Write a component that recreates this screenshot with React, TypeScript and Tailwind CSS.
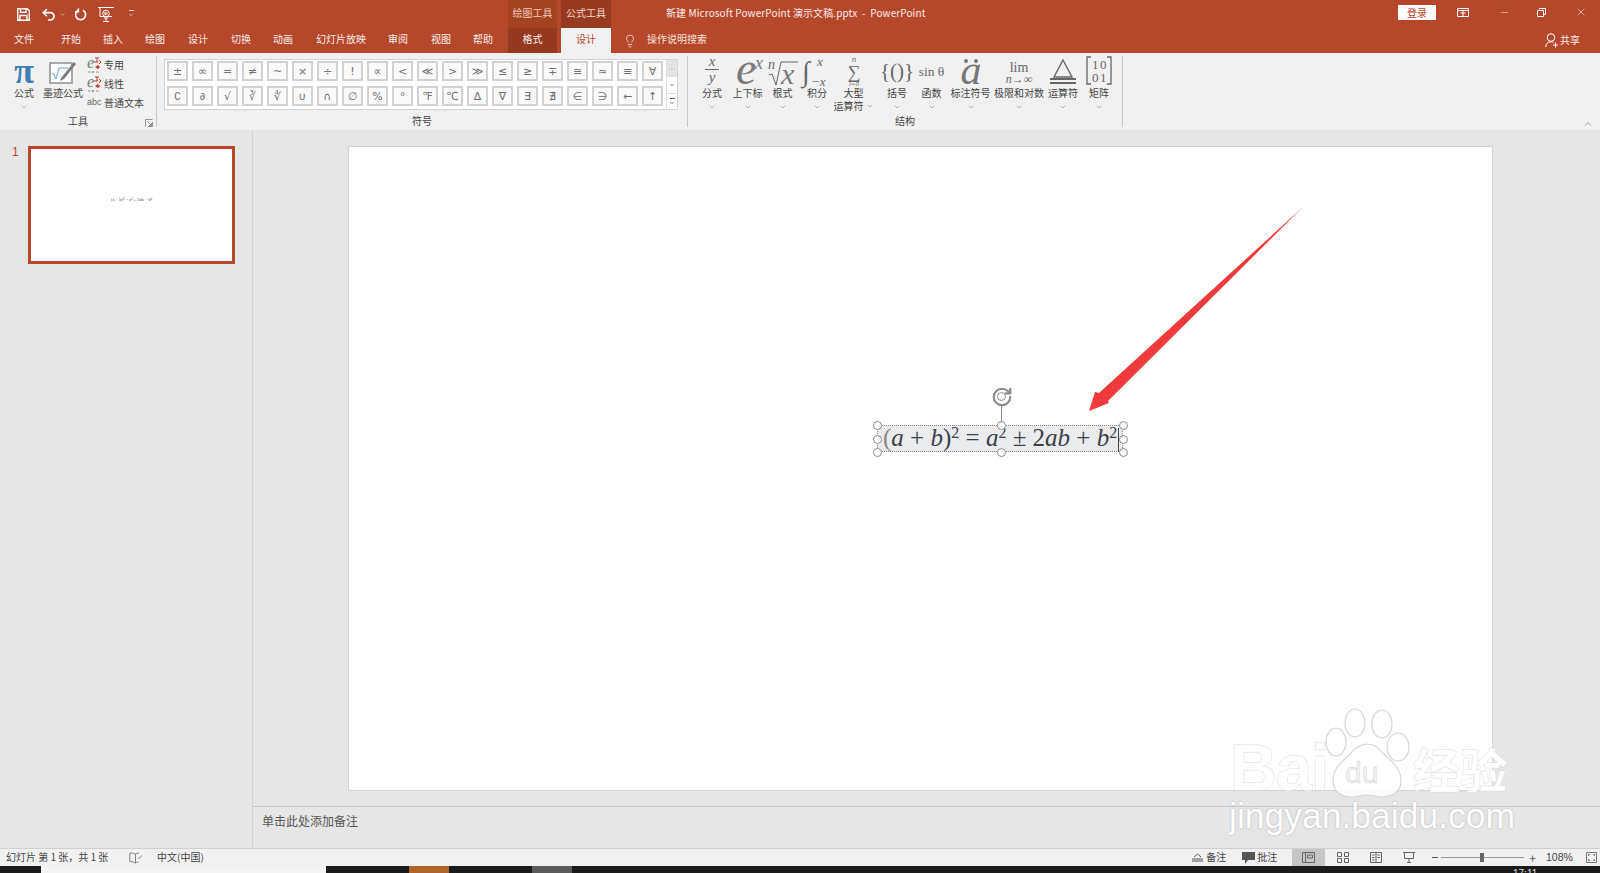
import React from "react";
import { Lightbulb, ChevronDown, ChevronUp, RotateCw, X, Minus } from "lucide-react";

const row1 = ["±","∞","=","≠","~","×","÷","!","∝","<","≪",">","≫","≤","≥","∓","≅","≈","≡","∀"];
const row2 = ["∁","∂","√","∛","∜","∪","∩","∅","%","°","℉","℃","∆","∇","∃","∄","∈","∋","←","↑"];
const serif = "font-['Liberation_Serif',serif]";

function Tab({ label, cls }: { label: string; cls: string }) {
  return <div className={`h-full flex items-center pb-[4px] text-[10px] text-[#fbeee9] whitespace-nowrap ${cls}`}>{label}</div>;
}

function Chev({ cls = "" }: { cls?: string }) {
  return <ChevronDown size={8} strokeWidth={1.5} className={`text-[#777] ${cls}`} />;
}

function EqIcon({ children, w = 36 }: { children: React.ReactNode; w?: number }) {
  return (
    <svg width={w} height={34} viewBox={`0 0 ${w} 34`} className={`shrink-0 overflow-visible ${serif} fill-[#666]`}>
      {children}
    </svg>
  );
}

function Struct({ w, label, label2, ml = "", children }: { w: string; label: string; label2?: string; ml?: string; children: React.ReactNode }) {
  return (
    <div className={`${w} ${ml} shrink-0 flex flex-col items-center`}>
      <div className="h-[31px] flex items-center justify-center overflow-visible">{children}</div>
      <div className="h-[14px] leading-[12px] text-[10px] text-[#444] whitespace-nowrap">{label}</div>
      {label2 ? (
        <div className="h-[12px] leading-[10px] text-[10px] text-[#444] whitespace-nowrap flex items-center gap-[2px] -mt-[1px]">{label2}<Chev /></div>
      ) : (
        <div className="h-[12px] flex items-center"><Chev /></div>
      )}
    </div>
  );
}

function GroupLabel({ children }: { children: React.ReactNode }) {
  return <div className="h-[12px] mt-[1px] leading-[12px] text-[10px] text-[#444] text-center">{children}</div>;
}

function Handle({ cls }: { cls: string }) {
  return <div className={`absolute w-[9px] h-[9px] rounded-full bg-white border-[1.5px] border-[#8c8c8c] ${cls}`} />;
}

function EFormula() {
  return (
    <svg width="16" height="16" viewBox="0 0 16 16" className={`shrink-0 mr-[1px] overflow-visible ${serif}`}>
      <text x="0" y="11" fontSize="16" fontStyle="italic" fill="#6f7f76">e</text>
      <path d="M8 1h4M10 1v4M7 5h4M12 3l2 2-2 2" fill="none" stroke="#c0392b" strokeWidth="1" />
      <path d="M8 10l3-2 2 2-2 2z" fill="#c0392b" />
      <path d="M1 15h3M5 14l2 2M7 14l-2 2M9 15h3" fill="none" stroke="#888" strokeWidth=".8" />
    </svg>
  );
}

function Sup() {
  return <sup className="text-[16px] -top-[8px] not-italic">2</sup>;
}

const wmText = "[-webkit-text-stroke:1px_#dcdcdc] [paint-order:stroke_fill]";

export default function App() {
  return (
    <div className="relative w-[1600px] h-[873px] overflow-hidden flex flex-col bg-[#e6e6e6] font-['Noto_Sans_CJK_SC','Noto_Sans',sans-serif]">
      {/* Title row */}
      <div className="h-[28px] shrink-0 flex bg-[#b7472a] text-white">
        <div className="w-[508px] shrink-0 flex items-center">
          <svg width="13" height="13" viewBox="0 0 13 13" fill="none" stroke="#fff" strokeWidth="1.4" className="ml-[17px]">
            <path d="M.7.7h9.500l2.100 2.100v9.500H.7z" />
            <path d="M3.500 .7v3.600h5.500V.7M3 12.300V7.500h7v4.800" />
          </svg>
          <svg width="14" height="13" viewBox="0 0 14 13" fill="none" stroke="#fff" strokeWidth="1.6" className="ml-[12px]">
            <path d="M5 1 1.300 4.600 5 8.200" />
            <path d="M1.500 4.600h6.800a3.700 3.700 0 0 1 0 7.400H6" />
          </svg>
          <ChevronDown size={7} strokeWidth={2} className="ml-[3px] text-[#f0cfc5]" />
          <svg width="13" height="13" viewBox="0 0 13 13" fill="none" stroke="#fff" strokeWidth="1.6" className="ml-[8px]">
            <path d="M4.200 2.300A5 5 0 1 0 9 2.300" />
            <path d="M4.400 .4v3.400H1" />
          </svg>
          <svg width="16" height="17" viewBox="0 0 16 17" fill="none" stroke="#fff" strokeWidth="1" className="ml-[11px]">
            <path d="M0 1.500h16M2 1.500v9h12" />
            <circle cx="8" cy="7.500" r="3.300" />
            <path d="M7 6v3l2.400-1.500zM6 12h4M5 15.500h6M8 12v3.500" />
          </svg>
          <div className="ml-[14px] flex flex-col items-center gap-[1px]">
            <div className="w-[5px] h-[1px] bg-[#f5d9d0]" />
            <ChevronDown size={6} strokeWidth={3} className="text-[#f5d9d0]" />
          </div>
        </div>
        <div className="w-[49px] shrink-0 bg-[#a5421f] flex items-center justify-center pb-[4px] text-[10px] text-[#efc9bd]">绘图工具</div>
        <div className="w-[50px] ml-[4px] shrink-0 bg-[#963a20] flex items-center justify-center pb-[4px] text-[10px] text-[#f4d6cc]">公式工具</div>
        <div className="ml-[55px] flex items-center pb-[4px] text-[10px] text-[#fbeee9] whitespace-pre tracking-[0.1px]">新建 Microsoft PowerPoint 演示文稿.pptx  -  PowerPoint</div>
        <div className="ml-auto flex items-center pr-[13px]">
          <div className="w-[38px] h-[15px] mb-[3px] bg-white flex items-center justify-center text-[10px] text-[#b7472a] mr-[21px]">登录</div>
          <svg width="12" height="9" viewBox="0 0 12 9" fill="none" stroke="#fff" strokeWidth="1" className="mb-[4px] mr-[30px]">
            <path d="M.5.5h11v8H.5zM.5 2.500h11M3.500 5h5M6 2.500V8" />
          </svg>
          <Minus size={11} strokeWidth={1} className="mb-[4px] mr-[27px]" />
          <svg width="9" height="9" viewBox="0 0 9 9" fill="none" stroke="#fff" strokeWidth="1" className="mb-[4px] mr-[29px]">
            <path d="M.5 2.500h6v6h-6zM2.500 2.500v-2h6v6h-2" />
          </svg>
          <X size={12} strokeWidth={1.1} className="mb-[4px]" />
        </div>
      </div>

      {/* Tab row */}
      <div className="h-[25px] shrink-0 flex items-stretch bg-[#b7472a] text-white">
        <Tab label="文件" cls="pl-[14px] w-[61px]" />
        <Tab label="开始" cls="w-[42px]" />
        <Tab label="插入" cls="w-[42px]" />
        <Tab label="绘图" cls="w-[43px]" />
        <Tab label="设计" cls="w-[43px]" />
        <Tab label="切换" cls="w-[42px]" />
        <Tab label="动画" cls="w-[43px]" />
        <Tab label="幻灯片放映" cls="w-[72px]" />
        <Tab label="审阅" cls="w-[43px]" />
        <Tab label="视图" cls="w-[42px]" />
        <Tab label="帮助" cls="w-[35px]" />
        <div className="w-[49px] shrink-0 bg-[#933a20] flex items-center justify-center pb-[4px] text-[10px] text-[#fbeee9]">格式</div>
        <div className="w-[50px] ml-[4px] shrink-0 bg-[#f1f1f1] flex items-center justify-center pb-[4px] text-[10px] text-[#b7472a]">设计</div>
        <Lightbulb size={14} strokeWidth={1.3} className="ml-[12px] self-center text-[#fbeee9]" />
        <div className="ml-[10px] flex items-center pb-[4px] text-[10px] text-[#f8e3dc]">操作说明搜索</div>
        <div className="ml-auto pr-[20px] flex items-center text-[10px] text-[#fbeee9]">
          <svg width="14" height="15" viewBox="0 0 14 15" fill="none" stroke="#fff" strokeWidth="1" className="mr-[-1px]">
            <circle cx="6" cy="4.500" r="3.800" />
            <path d="M.7 14c0-3 2-5.200 5.300-5.200 1 0 1.800.2 2.500.6M10.500 9.500v5M8 12h5" />
          </svg>
          <span className="ml-[2px] pb-[3px]">共享</span>
        </div>
      </div>

      {/* Ribbon */}
      <div className="relative h-[78px] shrink-0 flex bg-[#f1f1f1] border-b border-[#e2e2e2]">
        {/* Tools group */}
        <div className="relative w-[157px] shrink-0 my-[3px] border-r border-[#c8c8c8] flex flex-col">
          <div className="h-[62px] flex">
            <div className="w-[48px] flex flex-col items-center">
              <div className={`h-[31px] w-full flex items-center justify-center text-[36px] leading-[31px] font-bold text-[#3f7fb5] ${serif}`}>π</div>
              <div className="h-[14px] leading-[12px] text-[10px] text-[#444]">公式</div>
              <div className="h-[12px] flex items-center"><Chev /></div>
            </div>
            <div className="w-[30px] flex flex-col items-center">
              <div className="h-[31px] flex items-center justify-center">
                <svg width="28" height="26" viewBox="0 0 28 26" fill="none" className="overflow-visible">
                  <rect x="1" y="4" width="22" height="20" fill="#fff" stroke="#8f8f8f" strokeWidth="1.500" />
                  <path d="M3 15h2l2 5 3-11h9" stroke="#5b9bc9" strokeWidth="1" />
                  <path d="M6 12h15M6 18h15" stroke="#cfe0ec" strokeWidth=".6" />
                  <path d="M12 19 25 3l2 2-12 15-4 2z" fill="#7b7b7b" />
                </svg>
              </div>
              <div className="h-[14px] leading-[12px] text-[10px] text-[#444] whitespace-nowrap">墨迹公式</div>
            </div>
            <div className="ml-[9px] flex flex-col pt-[1px] gap-[3px]">
              <div className="h-[16px] flex items-center text-[10px] text-[#444]"><EFormula /><span className="pb-[2px]">专用</span></div>
              <div className="h-[16px] flex items-center text-[10px] text-[#444]"><EFormula /><span className="pb-[2px]">线性</span></div>
              <div className="h-[16px] flex items-center text-[10px] text-[#444]"><span className="w-[17px] text-[9px] text-[#666] font-['Liberation_Sans',sans-serif]">abc</span><span className="pb-[2px]">普通文本</span></div>
            </div>
          </div>
          <GroupLabel>工具</GroupLabel>
          <svg width="8" height="8" viewBox="0 0 8 8" fill="none" stroke="#777" strokeWidth=".8" className="absolute right-[3px] bottom-[0px]">
            <path d="M.5 7.500v-7h7M7.500 3v4.500H3M2.500 2.500l4 4M6.500 4v2.500H4" />
          </svg>
        </div>

        {/* Symbols group */}
        <div className="w-[531px] shrink-0 my-[3px] border-r border-[#c8c8c8] flex flex-col">
          <div className="h-[62px] pl-[7px] pt-[3px]">
            <div className="w-[514px] h-[51px] flex bg-white border border-[#d4d4d4]">
              <div className="w-[502px] pl-[2px] pt-[1px] flex flex-col gap-[5px]">
                {[row1, row2].map((r, i) => (
                  <div key={i} className="flex gap-[4px]">
                    {r.map((s, j) => (
                      <div key={j} className="w-[21px] h-[20px] shrink-0 flex items-center justify-center border-2 border-[#d2d2d2] bg-[#fafafa] text-[11px] leading-none text-[#707070] font-['DejaVu_Sans',sans-serif]">{s}</div>
                    ))}
                  </div>
                ))}
              </div>
              <div className="ml-auto w-[11px] flex flex-col border-l border-[#e0e0e0]">
                <div className="h-[17px] bg-[#e4e4e4] flex items-center justify-center"><ChevronUp size={6} strokeWidth={3} className="text-[#bbb]" /></div>
                <div className="h-[16px] flex items-center justify-center"><ChevronDown size={6} strokeWidth={3} className="text-[#555]" /></div>
                <div className="h-[16px] border-t border-[#e0e0e0] flex flex-col items-center justify-center gap-[1px]">
                  <div className="w-[5px] h-[1px] bg-[#555]" />
                  <ChevronDown size={6} strokeWidth={3} className="text-[#555]" />
                </div>
              </div>
            </div>
          </div>
          <GroupLabel>符号</GroupLabel>
        </div>

        {/* Structures group */}
        <div className="w-[435px] shrink-0 my-[3px] border-r border-[#c8c8c8] flex flex-col">
          <div className="h-[62px] pl-[6px] flex">
            <Struct w="w-[36px]" label="分式">
              <EqIcon>
                <text x="18" y="11" textAnchor="middle" fontSize="15" fontStyle="italic">x</text>
                <rect x="11" y="14" width="14" height="1" />
                <text x="18" y="27" textAnchor="middle" fontSize="15" fontStyle="italic">y</text>
              </EqIcon>
            </Struct>
            <Struct w="w-[35px]" label="上下标">
              <EqIcon>
                <text x="6" y="29" fontSize="46" fontStyle="italic" className="fill-[#7a7a7a]">e</text>
                <text x="25" y="14" fontSize="18" fontStyle="italic" className="fill-[#7a7a7a]">x</text>
              </EqIcon>
            </Struct>
            <Struct w="w-[35px]" label="根式">
              <EqIcon>
                <text x="3" y="14" fontSize="14" fontStyle="italic">n</text>
                <path d="M4 20l3-1 4 11 5-23h17" fill="none" stroke="#666" strokeWidth="1" />
                <text x="16" y="29" fontSize="30" fontStyle="italic" className="fill-[#7a7a7a]">x</text>
              </EqIcon>
            </Struct>
            <Struct w="w-[34px]" label="积分">
              <EqIcon>
                <text x="3" y="26" fontSize="28">∫</text>
                <text x="18" y="11" fontSize="13" fontStyle="italic">x</text>
                <text x="12" y="31" fontSize="13" fontStyle="italic">−x</text>
              </EqIcon>
            </Struct>
            <Struct w="w-[39px]" label="大型" label2="运算符">
              <EqIcon>
                <text x="18" y="7" textAnchor="middle" fontSize="9" fontStyle="italic">n</text>
                <text x="18" y="23" textAnchor="middle" fontSize="18">∑</text>
                <text x="18" y="31" textAnchor="middle" fontSize="7" fontStyle="italic">i=0</text>
              </EqIcon>
            </Struct>
            <Struct w="w-[38px]" ml="ml-[5px]" label="括号">
              <EqIcon>
                <text x="18" y="23" textAnchor="middle" fontSize="21">{"{()}"}</text>
              </EqIcon>
            </Struct>
            <Struct w="w-[31px]" label="函数">
              <EqIcon w={31}>
                <text x="15.500" y="21" textAnchor="middle" fontSize="13.500">sin θ</text>
              </EqIcon>
            </Struct>
            <Struct w="w-[47px]" label="标注符号">
              <EqIcon>
                <text x="18" y="29" textAnchor="middle" fontSize="42" fontStyle="italic" className="fill-[#777]">a</text>
                <circle cx="13" cy="6" r="2" className="fill-[#777]" />
                <circle cx="23" cy="6" r="2" className="fill-[#777]" />
              </EqIcon>
            </Struct>
            <Struct w="w-[50px]" label="极限和对数">
              <EqIcon>
                <text x="18" y="17" textAnchor="middle" fontSize="14">lim</text>
                <text x="18" y="28" textAnchor="middle" fontSize="12" fontStyle="italic">n→∞</text>
              </EqIcon>
            </Struct>
            <Struct w="w-[38px]" label="运算符">
              <EqIcon>
                <path d="M18 5 27 22H9z" fill="none" stroke="#666" strokeWidth="1.400" />
                <rect x="5" y="23" width="26" height="2" />
                <rect x="5" y="27" width="26" height="2" />
              </EqIcon>
            </Struct>
            <Struct w="w-[34px]" label="矩阵">
              <EqIcon w={34}>
                <path d="M9 2H5v27h4M25 2h4v27h-4" fill="none" stroke="#666" strokeWidth="1.300" />
                <text x="10" y="14" fontSize="13">1</text>
                <text x="18" y="14" fontSize="13">0</text>
                <text x="10" y="27" fontSize="13">0</text>
                <text x="18" y="27" fontSize="13">1</text>
              </EqIcon>
            </Struct>
          </div>
          <GroupLabel>结构</GroupLabel>
        </div>
        <ChevronUp size={12} strokeWidth={1.200} className="absolute right-[6px] bottom-[0px] text-[#777]" />
      </div>

      {/* Work area */}
      <div className="h-[717px] shrink-0 flex">
        <div className="w-[253px] shrink-0 border-r border-[#d2d2d2] pt-[15px] flex items-start">
          <div className="w-[28px] pl-[12px] text-[12px] leading-[12px] text-[#b7472a] font-['Liberation_Sans',sans-serif]">1</div>
          <div className="w-[207px] h-[118px] border-[3px] border-[#b7472a] bg-white flex items-center justify-center">
            <div className={`text-[4.500px] leading-none mb-[10px] text-[#555] whitespace-nowrap ${serif}`}>(a + b)² = a² ± 2ab + b²</div>
          </div>
        </div>
        <div className="flex-1 min-w-0 flex flex-col">
          <div className="h-[676px] shrink-0 border-b border-[#c8c8c8] pl-[95px] pt-[15px]">
            <div className="relative w-[1145px] h-[645px] bg-white border border-[#d4d4d4]">
              {/* Equation */}
              <div className={`absolute left-[528px] top-[278px] w-[246px] h-[27px] pl-[5px] border border-dotted border-[#888] bg-[#e9ebec] text-[25px] leading-[24px] text-[#3c4048] whitespace-pre ${serif}`}>
                <span className="text-[#888]">(</span><i>a</i> + <i>b</i>)<Sup /> = <i>a</i><Sup /> ± 2<i>ab</i> + <i>b</i><Sup /><span className="inline-block align-middle ml-[1px] w-[1px] h-[24px] bg-[#444]" />
              </div>
              <Handle cls="left-[524px] top-[274px]" />
              <Handle cls="left-[648px] top-[274px]" />
              <Handle cls="left-[770px] top-[274px]" />
              <Handle cls="left-[524px] top-[288px]" />
              <Handle cls="left-[770px] top-[288px]" />
              <Handle cls="left-[524px] top-[301px]" />
              <Handle cls="left-[648px] top-[301px]" />
              <Handle cls="left-[770px] top-[301px]" />
              <div className="absolute left-[652px] top-[258px] w-[1px] h-[17px] bg-[#8c8c8c]" />
              <RotateCw size={22} strokeWidth={2.400} className="absolute left-[642px] top-[239px] text-[#8c8c8c]" />
              <div className="absolute left-[648px] top-[245px] w-[9px] h-[9px] rounded-full border border-[#8c8c8c]" />
              {/* Arrow */}
              <svg width="240" height="230" viewBox="0 0 240 230" className="absolute left-[730px] top-[55px]">
                <path d="M224 5 20 191l-4-1-6 19 20-8-1-2z" fill="#ee3a3a" />
              </svg>
            </div>
          </div>
          <div className="h-[40px] shrink-0 pl-[9px] pt-[6px] text-[12px] leading-[16px] text-[#555]">单击此处添加备注</div>
        </div>
      </div>

      {/* Status bar */}
      <div className="h-[18px] shrink-0 border-t border-[#d0d0d0] bg-[#f1f1f1] flex items-center text-[10px] text-[#444]">
        <div className="pl-[6px] w-[129px] pb-[2px] whitespace-nowrap">幻灯片 第 1 张，共 1 张</div>
        <svg width="13" height="12" viewBox="0 0 13 12" fill="none" stroke="#777" strokeWidth=".9">
          <path d="M6.500 2v9C5 10 3 9.500 .8 9.500V1C3 1 5 1.200 6.500 2 8 1.200 9 1 10 1M6.500 11c1-.5 2-1 3-1.200" />
          <path d="M9 5.500l1.200 1.200L12.500 3.500" />
        </svg>
        <div className="ml-[15px] pb-[2px]">中文(中国)</div>
        <div className="ml-auto flex items-center h-full">
          <svg width="11" height="9" viewBox="0 0 11 9" fill="none" stroke="#555" strokeWidth="1"><path d="M2 4 5.500 1 9 4M0 6h11M0 8h11" /></svg>
          <span className="ml-[3px] pb-[2px]">备注</span>
          <svg width="13" height="12" viewBox="0 0 13 12" fill="#555" className="ml-[16px]"><path d="M0 0h13v8H6l-3 4V8H0z" /></svg>
          <span className="ml-[2px] pb-[2px]">批注</span>
          <div className="ml-[15px] w-[33px] h-full bg-[#c6c6c6] flex items-center justify-center">
            <svg width="13" height="11" viewBox="0 0 13 11" fill="none" stroke="#666" strokeWidth="1"><path d="M.5.5h12v10H.5zM3.500 .5v10M5.500 3h5v3h-5z" /></svg>
          </div>
          <svg width="12" height="11" viewBox="0 0 12 11" fill="none" stroke="#666" strokeWidth="1" className="ml-[12px]"><path d="M.5.5h4v4h-4zM7.500 .5h4v4h-4zM.5 6.500h4v4h-4zM7.500 6.500h4v4h-4z" /></svg>
          <svg width="12" height="11" viewBox="0 0 12 11" fill="none" stroke="#666" strokeWidth="1" className="ml-[21px]"><path d="M.5.5h11v10H.5zM6 .5v10M2 3h2.500M2 5.500h2.500M2 8h2.500M7.500 3h2.500M7.500 5.500h2.500" /></svg>
          <svg width="12" height="11" viewBox="0 0 12 11" fill="none" stroke="#666" strokeWidth="1" className="ml-[21px]"><path d="M0 .5h12M1.500 .5v6h9v-6M6 6.500V10M4 10.500h4" /></svg>
          <div className="ml-[17px] w-[6px] h-[1px] bg-[#555]" />
          <div className="ml-[3px] relative w-[83px] h-[1px] bg-[#999] flex items-center">
            <div className="absolute left-[39px] w-[4px] h-[9px] bg-[#666]" />
          </div>
          <div className="ml-[5px] text-[#555] text-[12px] leading-none">+</div>
          <div className="ml-[10px] w-[26px] font-['Liberation_Sans',sans-serif] text-[10.500px] text-[#444]">108%</div>
          <svg width="11" height="11" viewBox="0 0 11 11" fill="none" stroke="#777" strokeWidth="1" className="ml-[14px] mr-[3px]"><path d="M.5.5h10v10H.5zM2.500 4V2.500H4M7 2.500h1.500V4M8.500 7v1.500H7M4 8.500H2.500V7" /></svg>
        </div>
      </div>

      {/* Taskbar strip */}
      <div className="h-[7px] shrink-0 flex overflow-hidden bg-[#1b1b1b]">
        <div className="w-[41px] shrink-0" />
        <div className="w-[285px] shrink-0 bg-[#f4f4f4]" />
        <div className="w-[83px] shrink-0" />
        <div className="w-[40px] shrink-0 bg-[#b0662a]" />
        <div className="w-[83px] shrink-0" />
        <div className="w-[40px] shrink-0 bg-[#5b5b5b]" />
        <div className="ml-[941px] text-[10px] leading-[10px] text-[#ddd] pt-[3px] font-['Liberation_Sans',sans-serif]">17:11</div>
      </div>

      {/* Watermark */}
      <div className="absolute left-[1225px] top-[700px] w-[290px] h-[140px] pointer-events-none">
        <div className={`absolute left-[5px] top-[28px] text-[65px] leading-[80px] font-bold tracking-[-1px] text-white/90 font-['Liberation_Sans',sans-serif] ${wmText}`}>Bai</div>
        <svg width="100" height="95" viewBox="0 0 100 95" className="absolute left-[92px] top-[5px]">
          <g fill="#fff" fillOpacity=".85" stroke="#d8d8d8" strokeWidth="1.200">
            <ellipse cx="38" cy="18" rx="10" ry="14" />
            <ellipse cx="65" cy="19" rx="10" ry="14" />
            <ellipse cx="19" cy="37" rx="10" ry="14" />
            <ellipse cx="81" cy="42" rx="11" ry="14" />
            <path d="M50 39c10 0 14 8 21 14 8 7 13 13 13 23 0 10-9 16-18 16-6 0-10-2-16-2s-10 2-16 2c-10 0-18-6-18-16 0-10 5-16 13-23 7-6 11-14 21-14z" />
          </g>
        </svg>
        <div className="absolute left-[120px] top-[55px] text-[30px] leading-[36px] text-[#f2f2f2] font-['Liberation_Sans',sans-serif] [-webkit-text-stroke:0.5px_#cfcfcf]">du</div>
        <div className={`absolute left-[188px] top-[38px] text-[47px] leading-[60px] font-bold text-white/90 whitespace-nowrap ${wmText}`}>经验</div>
        <div className="absolute left-[4px] top-[95px] text-[35.500px] leading-[42px] text-white font-['Liberation_Sans',sans-serif] whitespace-nowrap [text-shadow:0_0_2px_#aaa]">jingyan.baidu.com</div>
      </div>
    </div>
  );
}
